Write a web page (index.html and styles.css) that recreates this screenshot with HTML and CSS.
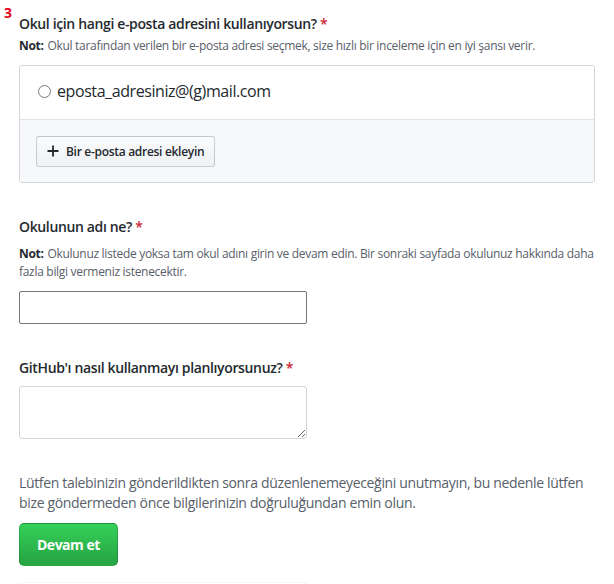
FILE: index.html
```html
<!DOCTYPE html>
<html lang="tr">
<head>
<meta charset="utf-8">
<title>Okul bilgileri</title>
<link rel="stylesheet" href="styles.css">
</head>
<body>
<div class="page">
  <div class="step">3</div>
  <form class="form">
    <section class="field field-email">
      <h3 class="label">Okul için hangi e-posta adresini kullanıyorsun? <span class="req">*</span></h3>
      <p class="note note-email"><strong>Not:</strong> Okul tarafından verilen bir e-posta adresi seçmek, size hızlı bir inceleme için en iyi şansı verir.</p>
      <div class="email-box">
        <label class="email-option">
          <input type="radio" name="email" class="radio">
          <span class="email-text">eposta_adresiniz@(g)mail.com</span>
        </label>
        <div class="email-footer">
          <button type="button" class="btn">
            <svg class="btn-icon" width="12" height="12" viewBox="0 0 12 12" aria-hidden="true"><path d="M5.1 0.5h1.8v4.6h4.6v1.8H6.9v4.6H5.1V6.9H0.5V5.1h4.6z" fill="#24292e"/></svg>
            <span>Bir e-posta adresi ekleyin</span>
          </button>
        </div>
      </div>
    </section>

    <section class="field field-school">
      <h3 class="label">Okulunun adı ne? <span class="req">*</span></h3>
      <p class="note note-school"><strong>Not:</strong> Okulunuz listede yoksa tam okul adını girin ve devam edin. Bir sonraki sayfada okulunuz hakkında daha fazla bilgi vermeniz istenecektir.</p>
      <input type="text" class="text-input">
    </section>

    <section class="field field-usage">
      <h3 class="label">GitHub'ı nasıl kullanmayı planlıyorsunuz? <span class="req">*</span></h3>
      <textarea class="textarea"></textarea>
    </section>

    <p class="disclaimer">Lütfen talebinizin gönderildikten sonra düzenlenemeyeceğini unutmayın, bu nedenle lütfen bize göndermeden önce bilgilerinizin doğruluğundan emin olun.</p>

    <button type="submit" class="btn-primary">Devam et</button>

    <div class="next-field"></div>
  </form>
</div>
</body>
</html>
```

FILE: styles.css
```css
* { box-sizing: border-box; }

html, body {
  margin: 0;
  padding: 0;
  background: #fff;
}

body {
  font-family: "Open Sans", "Noto Sans", sans-serif;
  color: #24292e;
  font-size: 14px;
  line-height: 20px;
  overflow: hidden;
  height: 584px;
}

.page {
  display: flex;
  align-items: flex-start;
}

.step {
  width: 19px;
  padding-left: 4px;
  padding-top: 3px;
  font-size: 14px;
  line-height: 20px;
  font-weight: 700;
  color: #e3061a;
  flex: none;
}

.form {
  flex: 1;
  padding-right: 19px;
  display: flex;
  flex-direction: column;
  align-items: flex-start;
}

.field { width: 100%; }

.label {
  margin: 0;
  font-size: 14px;
  line-height: 20px;
  font-weight: 600;
  letter-spacing: -0.36px;
  color: #24292e;
}

.req { color: #cb2431; font-weight: 600; }

.field-email .label { margin-top: 14px; }
.field-school .label { margin-top: 34px; }
.field-usage .label { margin-top: 34px; }

.note {
  margin: 0;
  font-size: 12px;
  line-height: 18px;
  letter-spacing: -0.3px;
  color: #586069;
}
.note strong {
  color: #24292e;
  font-weight: 700;
  padding-right: 1px;
}

.note-email { margin-top: 3px; }
.note-school { margin-top: 8px; }

.email-box {
  margin-top: 10px;
  border: 1px solid #d1d5da;
  border-radius: 3px;
  overflow: hidden;
}

.email-option {
  display: flex;
  align-items: center;
  padding: 13px 16px 16px 18px;
  font-size: 16px;
  line-height: 24px;
  letter-spacing: -0.42px;
  color: #24292e;
  background: #fff;
}

.radio {
  appearance: none;
  -webkit-appearance: none;
  width: 13px;
  height: 13px;
  margin: 0 6px 0 0;
  border: 1px solid #7a7a7a;
  border-radius: 50%;
  background: #fff;
  flex: none;
}

.email-footer {
  border-top: 1px solid #e1e4e8;
  background: #f6f8fa;
  padding: 16px 16px 15px;
}

.btn {
  display: inline-flex;
  align-items: center;
  height: 31px;
  padding: 0 10px 0 10px;
  font-family: inherit;
  font-size: 12px;
  font-weight: 600;
  line-height: 19px;
  letter-spacing: -0.3px;
  color: #24292e;
  background: linear-gradient(180deg, #fafbfc, #eff3f6 90%);
  border: 1px solid rgba(27, 31, 35, 0.2);
  border-radius: 3px;
}

.btn-icon {
  margin: 0 7px 2px 0;
  flex: none;
}

.text-input {
  display: block;
  margin-top: 10px;
  width: 288px;
  height: 33px;
  padding: 6px 8px;
  font-family: inherit;
  font-size: 14px;
  border: 1px solid #767676;
  border-radius: 2px;
  background: #fff;
}

.textarea {
  display: block;
  margin-top: 8px;
  width: 288px;
  height: 53px;
  padding: 6px 8px;
  font-family: inherit;
  font-size: 14px;
  border: 1px solid #d1d5da;
  border-radius: 3px;
  background: #fff;
  resize: vertical;
}

.disclaimer {
  margin: 34px 0 0;
  font-size: 14px;
  line-height: 20px;
  letter-spacing: -0.34px;
  color: #586069;
}

.btn-primary {
  margin-top: 10px;
  height: 43px;
  padding: 0 17px;
  font-family: inherit;
  font-size: 14px;
  font-weight: 700;
  letter-spacing: -0.5px;
  color: #fff;
  background: linear-gradient(180deg, #34d058, #28a745 90%);
  border: 1px solid rgba(27, 31, 35, 0.2);
  border-radius: 5px;
}

.next-field {
  margin-top: 16px;
  width: 288px;
  height: 40px;
  border: 1px solid #e1e4e8;
  border-top-color: #f6f7f8;
  border-radius: 3px;
}
```
